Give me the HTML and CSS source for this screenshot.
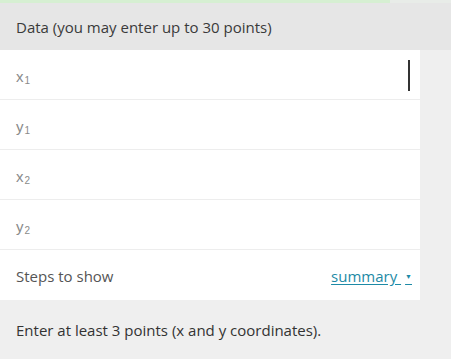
FILE: index.html
```html
<!DOCTYPE html>
<html>
<head>
<meta charset="utf-8">
<link rel="stylesheet" href="styles.css">
</head>
<body>
<div class="topstrip"><div class="green"></div></div>
<div class="header">Data (you may enter up to 30 points)</div>
<div class="main">
  <div class="panel">
    <div class="row"><span class="ph">x<sub>1</sub></span><span class="caret"></span></div>
    <div class="row"><span class="ph">y<sub>1</sub></span></div>
    <div class="row"><span class="ph">x<sub>2</sub></span></div>
    <div class="row"><span class="ph">y<sub>2</sub></span></div>
    <div class="row last"><span class="label">Steps to show</span><a class="link">summary <span class="tri">▼</span></a></div>
  </div>
  <div class="side"></div>
</div>
<div class="footer">Enter at least 3 points (x and y coordinates).</div>
</body>
</html>
```
FILE: styles.css
```css
html, body { margin: 0; padding: 0; }
body {
  background: #efefef;
  font-family: "Open Sans", "Noto Sans", sans-serif;
  color: #333;
  width: 451px;
  height: 359px;
  overflow: hidden;
}
.topstrip { height: 3px; background: #e8ece8; display: flex; }
.green { width: 390px; background: #d6efd2; }
.header {
  height: 47px;
  background: #e6e6e6;
  display: flex;
  align-items: center;
  padding-left: 16px;
  font-size: 15px;
  color: #3a3a3a;
}
.main { display: flex; }
.panel { width: 420px; background: #fff; }
.side { flex: 1; background: #efefef; }
.row {
  height: 49px;
  border-bottom: 1px solid #ededed;
  display: flex;
  align-items: center;
  padding: 0 8px 0 16px;
  position: relative;
}
.row.last { border-bottom: none; height: 50px; }
.ph {
  font-family: "Liberation Sans", Arial, sans-serif;
  font-size: 15px;
  color: #8a8a8a;
  padding-top: 4px;
}
.ph sub { font-size: 10px; vertical-align: -2px; margin-left: 1px; }
.caret {
  position: absolute;
  left: 408px;
  top: 10px;
  width: 2px;
  height: 31px;
  background: #333;
}
.label { font-size: 15px; color: #555; flex: 1; padding-top: 2px; }
.link {
  font-size: 15px;
  color: #1d8aa6;
  text-decoration: underline;
  text-underline-offset: 2px;
  padding-top: 2px;
}
.tri { font-size: 7px; vertical-align: 3px; margin-left: 4px; }
.footer {
  height: 59px;
  display: flex;
  align-items: center;
  padding-left: 16px;
  font-size: 15px;
  color: #333;
}
```
